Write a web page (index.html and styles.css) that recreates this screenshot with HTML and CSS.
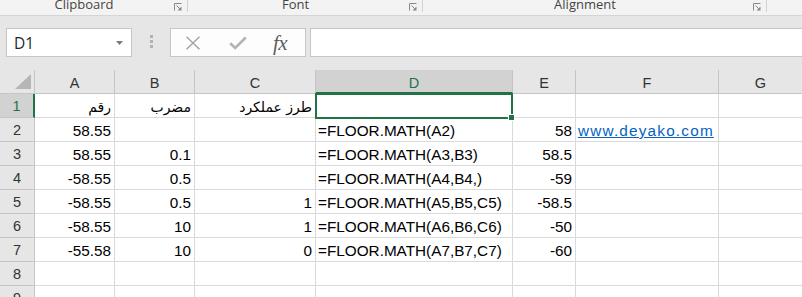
FILE: index.html
```html
<!DOCTYPE html>
<html>
<head>
<meta charset="utf-8">
<link rel="stylesheet" href="styles.css">
</head>
<body>
<div class="ribbon">
  <div class="grp g1"><span class="glabel">Clipboard</span><svg class="launch" width="8" height="8" viewBox="0 0 8 8"><path d="M0.5 7.5V0.5H7.5" fill="none" stroke="#8a8a8a"/><path d="M2.5 2.5L6 6" stroke="#8a8a8a"/><path d="M7.5 7.5H3.5L7.5 3.5Z" fill="#8a8a8a"/></svg></div><span class="sep"></span>
  <div class="grp g2"><span class="glabel">Font</span><svg class="launch" width="8" height="8" viewBox="0 0 8 8"><path d="M0.5 7.5V0.5H7.5" fill="none" stroke="#8a8a8a"/><path d="M2.5 2.5L6 6" stroke="#8a8a8a"/><path d="M7.5 7.5H3.5L7.5 3.5Z" fill="#8a8a8a"/></svg></div><span class="sep"></span>
  <div class="grp g3"><span class="glabel">Alignment</span><svg class="launch" width="8" height="8" viewBox="0 0 8 8"><path d="M0.5 7.5V0.5H7.5" fill="none" stroke="#8a8a8a"/><path d="M2.5 2.5L6 6" stroke="#8a8a8a"/><path d="M7.5 7.5H3.5L7.5 3.5Z" fill="#8a8a8a"/></svg></div><span class="sep"></span>
</div>
<div class="fbar">
  <div class="namebox"><span class="nbtext">D1</span><svg class="caret" width="7" height="4" viewBox="0 0 7 4"><path d="M0 0H7L3.5 4Z" fill="#7a7a7a"/></svg></div>
  <div class="grip"><i></i><i></i><i></i></div>
  <div class="fbtns">
    <svg class="ico-x" width="16" height="14" viewBox="0 0 16 14"><path d="M1.5 0.8L14.5 13.2M14.5 0.8L1.5 13.2" stroke="#a3a3a3" stroke-width="1.4" fill="none"/></svg>
    <svg class="ico-ok" width="18" height="14" viewBox="0 0 18 14"><path d="M1.2 7.2L6.2 12L16.8 1.5" stroke="#b3b3b3" stroke-width="2.6" fill="none"/></svg>
    <span class="fx">fx</span>
  </div>
  <div class="finput"></div>
</div>
<div class="sheet">
  <div class="corner"><svg width="16" height="15" viewBox="0 0 16 15"><path d="M16 0V15H0Z" fill="#b6b6b6"/></svg></div>
  <div class="ch">A</div><div class="ch">B</div><div class="ch">C</div><div class="ch chsel">D</div><div class="ch">E</div><div class="ch">F</div><div class="ch">G</div>

  <div class="rh rhsel">1</div>
  <div class="c r"><span dir="rtl" class="ar">رقم</span></div>
  <div class="c r"><span dir="rtl" class="ar">مضرب</span></div>
  <div class="c r"><span dir="rtl" class="ar">طرز عملکرد</span></div>
  <div class="c active"><span class="selbox"><span class="handle"></span></span></div>
  <div class="c"></div><div class="c"></div><div class="c"></div>

  <div class="rh">2</div>
  <div class="c r">58.55</div><div class="c r"></div><div class="c r"></div>
  <div class="c l">=FLOOR.MATH(A2)</div><div class="c r">58</div>
  <div class="c l"><span class="link">www.deyako.com</span></div><div class="c"></div>

  <div class="rh">3</div>
  <div class="c r">58.55</div><div class="c r">0.1</div><div class="c r"></div>
  <div class="c l">=FLOOR.MATH(A3,B3)</div><div class="c r">58.5</div>
  <div class="c"></div><div class="c"></div>

  <div class="rh">4</div>
  <div class="c r">-58.55</div><div class="c r">0.5</div><div class="c r"></div>
  <div class="c l">=FLOOR.MATH(A4,B4,)</div><div class="c r">-59</div>
  <div class="c"></div><div class="c"></div>

  <div class="rh">5</div>
  <div class="c r">-58.55</div><div class="c r">0.5</div><div class="c r">1</div>
  <div class="c l">=FLOOR.MATH(A5,B5,C5)</div><div class="c r">-58.5</div>
  <div class="c"></div><div class="c"></div>

  <div class="rh">6</div>
  <div class="c r">-58.55</div><div class="c r">10</div><div class="c r">1</div>
  <div class="c l">=FLOOR.MATH(A6,B6,C6)</div><div class="c r">-50</div>
  <div class="c"></div><div class="c"></div>

  <div class="rh">7</div>
  <div class="c r">-55.58</div><div class="c r">10</div><div class="c r">0</div>
  <div class="c l">=FLOOR.MATH(A7,B7,C7)</div><div class="c r">-60</div>
  <div class="c"></div><div class="c"></div>

  <div class="rh">8</div>
  <div class="c"></div><div class="c"></div><div class="c"></div><div class="c"></div><div class="c"></div><div class="c"></div><div class="c"></div>

  <div class="rh">9</div>
  <div class="c"></div><div class="c"></div><div class="c"></div><div class="c"></div><div class="c"></div><div class="c"></div><div class="c"></div>
</div>
</body>
</html>
```
FILE: styles.css
```css
html, body {
  margin: 0;
  padding: 0;
}
body {
  width: 802px;
  height: 297px;
  overflow: hidden;
  background: #ffffff;
  font-family: "Liberation Sans", Arial, sans-serif;
}

/* ribbon group labels */
.ribbon {
  display: flex;
  height: 15px;
  background: #f3f3f3;
  border-bottom: 1px solid #d5d5d5;
  overflow: hidden;
}
.grp {
  display: flex;
  align-items: flex-start;
}
.g1 { width: 187px; }
.g2 { width: 234px; }
.g3 { width: 343px; }
.glabel {
  flex: 1;
  text-align: center;
  padding-right: 6px;
  font-family: "Open Sans", sans-serif;
  font-size: 13px;
  line-height: 13px;
  margin-top: -2px;
  color: #454545;
}
.launch {
  margin-top: 3px;
  margin-right: 5px;
}
.sep {
  width: 1px;
  height: 12px;
  background: #d2d2d2;
}

/* formula bar */
.fbar {
  display: flex;
  align-items: flex-start;
  box-sizing: border-box;
  height: 54px;
  padding: 12px 0 0 6px;
  background: #e6e6e6;
  overflow: hidden;
}
.namebox {
  box-sizing: border-box;
  width: 126px;
  height: 29px;
  flex: none;
  background: #ffffff;
  border: 1px solid #c6c6c6;
  display: flex;
  align-items: center;
  padding-left: 7px;
}
.nbtext {
  flex: 1;
  font-family: "Open Sans", sans-serif;
  font-size: 15.5px;
  color: #262626;
}
.caret {
  margin-right: 8px;
}
.grip {
  display: flex;
  flex-direction: column;
  gap: 2px;
  margin: 7px 0 0 18px;
}
.grip i {
  display: block;
  width: 3px;
  height: 3px;
  background: #b2b2b2;
}
.fbtns {
  box-sizing: border-box;
  flex: none;
  width: 136px;
  height: 29px;
  margin-left: 17px;
  background: #fdfdfd;
  border: 1px solid #c6c6c6;
  display: flex;
  align-items: center;
}
.ico-x { margin-left: 14px; }
.ico-ok { margin-left: 28px; }
.fx {
  margin-left: 26px;
  font-family: "Liberation Serif", serif;
  font-style: italic;
  font-size: 21px;
  line-height: 20px;
  color: #5e5e5e;
  letter-spacing: -0.5px;
}
.finput {
  box-sizing: border-box;
  flex: none;
  width: 520px;
  height: 29px;
  margin-left: 4px;
  background: #ffffff;
  border: 1px solid #c6c6c6;
}

/* sheet grid */
.sheet {
  display: grid;
  grid-template-columns: 35px 80px 80px 121px 197px 63px 143px 84px;
  grid-auto-rows: 24px;
}
.sheet > div {
  box-sizing: border-box;
  border-right: 1px solid #dadada;
  border-bottom: 1px solid #dadada;
}
.corner, .ch, .rh {
  background: #e6e6e6;
}
.sheet > .corner {
  border-right-color: #c5c5c5;
  border-bottom-color: #c5c5c5;
  display: flex;
  align-items: flex-end;
  justify-content: flex-end;
  padding: 0 3px 4px 0;
}
.corner svg { display: block; }
.sheet > .ch {
  border-right-color: #c5c5c5;
  border-bottom-color: #c5c5c5;
  display: flex;
  align-items: center;
  justify-content: center;
  padding-top: 3px;
  font-size: 14.5px;
  color: #333333;
}
.sheet > .chsel {
  background: #d2d2d2;
  color: #217346;
  border-bottom: 2px solid #217346;
}
.sheet > .rh {
  border-right-color: #c5c5c5;
  border-bottom-color: #c5c5c5;
  display: flex;
  align-items: center;
  justify-content: center;
  font-size: 14.5px;
  color: #333333;
}
.sheet > .rhsel {
  background: #d2d2d2;
  color: #217346;
  border-right: 2px solid #217346;
}
.c {
  display: flex;
  align-items: flex-end;
  padding: 0 3px 1px 2px;
  font-size: 15.3px;
  line-height: 18px;
  color: #000000;
  white-space: nowrap;
}
.c.r { justify-content: flex-end; }
.c.l { justify-content: flex-start; }
.ar {
  font-family: "DejaVu Sans", sans-serif;
  font-size: 14px;
}
.link {
  color: #0563c1;
  text-decoration: underline;
  letter-spacing: 1.2px;
}
.active {
  position: relative;
}
.selbox {
  position: absolute;
  left: -1px;
  top: -1px;
  width: 198px;
  height: 26px;
  box-sizing: border-box;
  border: 2px solid #217346;
}
.handle {
  position: absolute;
  right: -4px;
  bottom: -4px;
  width: 5px;
  height: 5px;
  background: #217346;
  border: 1px solid #ffffff;
}
```
